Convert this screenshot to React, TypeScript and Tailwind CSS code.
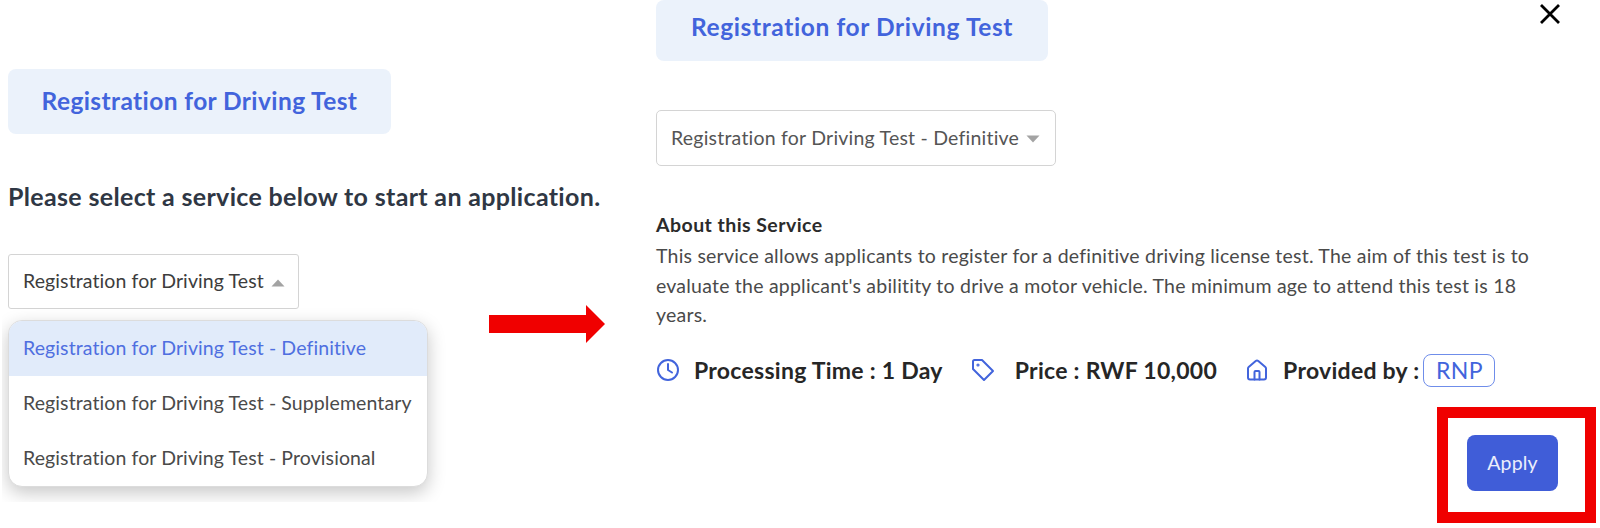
import React from "react";

const font = "font-['Lato','Noto_Sans',sans-serif]";

function Caret({ up = false }: { up?: boolean }) {
  return (
    <svg width="14" height="8" viewBox="0 0 14 8" className="shrink-0 ml-[7px] mt-[3px]">
      <path d={up ? "M7 0.5 L13.5 7.5 H0.5 Z" : "M0.5 0.5 H13.5 L7 7.5 Z"} fill="#a3a3a3" />
    </svg>
  );
}

function Pill({ w, h, extra }: { w: string; h: string; extra: string }) {
  return (
    <div className={`${w} ${h} ${extra} flex items-center justify-center rounded-lg bg-[#ebf2fb] text-[24.5px] font-bold text-[#4264dc] shrink-0`}>
      Registration for Driving Test
    </div>
  );
}

export default function App() {
  return (
    <div className={`relative flex h-[528px] w-[1600px] overflow-hidden bg-white ${font}`}>
      {/* Left panel */}
      <div className="flex w-[656px] shrink-0 flex-col pl-2 pt-[69px]">
        <Pill w="w-[383px]" h="h-[65px]" extra="tracking-[0.4px]" />
        <p className="mt-[44px] text-[25px] leading-[36px] font-bold tracking-[0.33px] whitespace-nowrap text-[#2f3744]">
          Please select a service below to start an application.
        </p>
        <div className="mt-[40px] flex h-[55px] w-[291px] items-center rounded-[3px] border border-[#d4d4d4] pb-[1px] pl-[14px] text-[19.5px] tracking-[0.1px] whitespace-nowrap text-[#3d3d3d]">
          Registration for Driving Test
          <Caret up />
        </div>
      </div>

      {/* Open menu */}
      <div className="absolute top-[300px] left-[2px] h-[202px] w-[460px] overflow-hidden">
        <div className="absolute top-[20px] left-[6px] w-[420px] overflow-hidden rounded-[14px] border border-[#dcdcdc] bg-white text-[19.5px] tracking-[0.1px] whitespace-nowrap text-[#4a4a4a] shadow-[0_6px_18px_rgba(0,0,0,0.22)]">
          <div className="flex h-[55px] items-center bg-[#e1ebfa] pb-[1px] pl-[14px] text-[#4f6fe0]">Registration for Driving Test - Definitive</div>
          <div className="flex h-[55px] items-center pb-[1px] pl-[14px]">Registration for Driving Test - Supplementary</div>
          <div className="flex h-[55px] items-center pb-[1px] pl-[14px]">Registration for Driving Test - Provisional</div>
        </div>
      </div>

      {/* Arrow */}
      <svg width="116" height="38" viewBox="0 0 116 38" className="absolute top-[305px] left-[489px]">
        <path d="M0 10 H97 V0 L116 19 L97 38 V28 H0 Z" fill="#f00000" />
      </svg>

      {/* Right panel */}
      <div className="flex min-w-0 flex-1 flex-col">
        <Pill w="w-[392px]" h="h-[61px]" extra="pb-[6px] tracking-[0.62px]" />
        <div className="mt-[49px] flex h-[56px] w-[400px] items-center rounded-[5px] border border-[#d4d4d4] pb-[1px] pl-[14px] text-[19.5px] tracking-[0.22px] whitespace-nowrap text-[#555555]">
          Registration for Driving Test - Definitive
          <Caret />
        </div>
        <h3 className="mt-[45px] text-[19.5px] leading-[28px] font-bold tracking-[0.45px] text-[#2b2b2b]">About this Service</h3>
        <p className="mt-[2px] w-[880px] text-[19.5px] leading-[29.6px] tracking-[0.22px] text-[#4a4a4a]">
          This service allows applicants to register for a definitive driving license test. The aim of this test is to evaluate the applicant's abilitity to drive a motor vehicle. The minimum age to attend this test is 18 years.
        </p>
        <div className="mt-[23px] flex h-[34px] items-center text-[23px] font-bold tracking-[0.27px] whitespace-nowrap text-[#262626]">
          <svg width="24" height="24" viewBox="0 0 24 24" fill="none" stroke="#4264dc" strokeWidth="2" strokeLinecap="round" strokeLinejoin="round" className="shrink-0">
            <circle cx="12" cy="12" r="10" />
            <path d="M12 6v6l4 2.5" />
          </svg>
          <span className="ml-[14px]">Processing Time : 1 Day</span>
          <svg width="24" height="24" viewBox="0 0 24 24" fill="none" stroke="#4264dc" strokeWidth="2" strokeLinecap="round" strokeLinejoin="round" className="ml-[28px] shrink-0">
            <path d="M2 3.5 A1.5 1.5 0 0 1 3.5 2 H11 L22 13 L13 22 L2 11 Z" />
            <circle cx="7" cy="7" r="0.6" />
          </svg>
          <span className="ml-[20px]">Price : RWF 10,000</span>
          <svg width="24" height="24" viewBox="0 0 24 24" fill="none" stroke="#4264dc" strokeWidth="2" strokeLinecap="round" strokeLinejoin="round" className="ml-[28px] shrink-0">
            <path d="M3 10.5 A2 2 0 0 1 3.7 9 L10.7 3 A2 2 0 0 1 13.3 3 L20.3 9 A2 2 0 0 1 21 10.5 V19.5 A2 2 0 0 1 19 21.5 H5 A2 2 0 0 1 3 19.5 Z" />
            <path d="M9.5 21.5 V14 A1 1 0 0 1 10.5 13 H13.5 A1 1 0 0 1 14.5 14 V21.5" />
          </svg>
          <span className="ml-[14px]">Provided by :</span>
          <span className="ml-[4px] mt-[1px] flex h-[33px] w-[72px] items-center justify-center rounded-lg border-[1.5px] border-[#6f8dea] text-[23px] font-normal tracking-[0.4px] text-[#4264dc]">RNP</span>
        </div>
      </div>

      {/* Close */}
      <svg width="22" height="20" viewBox="0 0 22 20" className="absolute top-[4px] left-[1539px]">
        <path d="M2 1 L20 19 M20 1 L2 19" stroke="#000" strokeWidth="2.8" fill="none" />
      </svg>

      {/* Highlight box with Apply */}
      <div className="absolute top-[407px] left-[1437px] h-[116px] w-[159px] border-[11px] border-[#f00000] pt-[17px] pl-[19px]">
        <button className="flex h-[56px] w-[91px] items-center justify-center rounded-lg bg-[#405dd8] text-[19.5px] tracking-[0.2px] text-white/90">Apply</button>
      </div>
    </div>
  );
}
